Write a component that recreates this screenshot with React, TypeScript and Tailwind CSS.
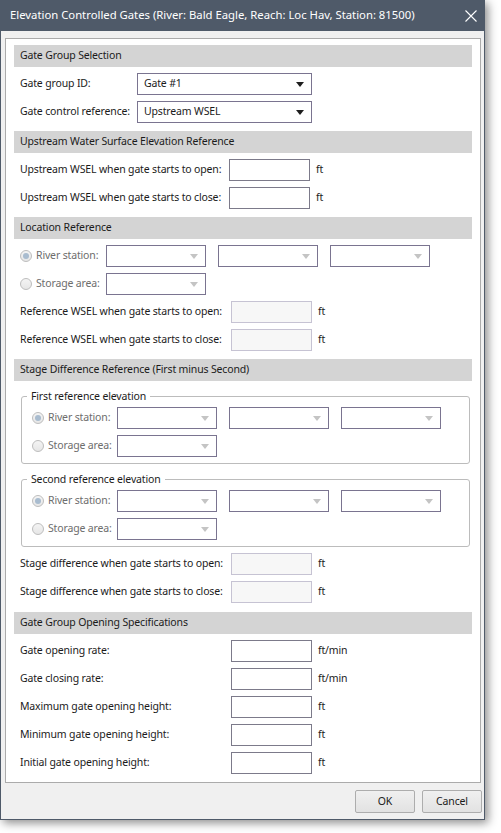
import React from 'react';

const ink = 'text-[#1b1b1b]';

function Arrow({ disabled }: { disabled?: boolean }) {
  return (
    <svg width="8" height="5" viewBox="0 0 8 5" className="shrink-0">
      <polygon points="0,0 8,0 4,5" fill={disabled ? '#c4c4c4' : '#1e1e1e'} />
    </svg>
  );
}

function Combo({ value, disabled, className }: { value?: string; disabled?: boolean; className: string }) {
  return (
    <div
      className={`flex h-[22px] shrink-0 items-center justify-between border border-[#7a7490] bg-white pl-[6px] pr-[7px] ${className}`}
    >
      <span className={`whitespace-nowrap ${ink}`}>{value}</span>
      <Arrow disabled={disabled} />
    </div>
  );
}

function TextBox({ disabled }: { disabled?: boolean }) {
  return (
    <div
      className={`h-[22px] w-[81px] shrink-0 border ${
        disabled ? 'border-[#c6c3d3] bg-[#f7f7f7]' : 'border-[#7c7a8a] bg-white'
      }`}
    />
  );
}

function Radio({ checked }: { checked?: boolean }) {
  return (
    <span className="grid h-[12px] w-[12px] shrink-0 place-items-center rounded-full border border-[#bdbdbd] bg-gradient-to-b from-[#f4f4f4] to-[#e6e6e6]">
      {checked && <span className="h-[6px] w-[6px] rounded-full bg-[#a9bccf]" />}
    </span>
  );
}

function Header({ children }: { children: React.ReactNode }) {
  return (
    <div className={`flex h-[22px] items-center whitespace-nowrap bg-[#d4d4d4] px-[6px] ${ink}`}>{children}</div>
  );
}

// label + textbox + unit
function InputRow({ label, unit, disabled, lw }: { label: string; unit: string; disabled?: boolean; lw: string }) {
  return (
    <div className="flex h-[22px] items-center">
      <span className={`${lw} shrink-0 whitespace-nowrap ${ink}`}>{label}</span>
      <TextBox disabled={disabled} />
      <span className={`ml-[6px] ${ink}`}>{unit}</span>
    </div>
  );
}

function StationRows({ lw }: { lw: string }) {
  return (
    <>
      <div className="flex h-[22px] items-center">
        <div className={`flex ${lw} shrink-0 items-center gap-[4px]`}>
          <Radio checked />
          <span className="whitespace-nowrap text-[#6d6d6d]">River station:</span>
        </div>
        <div className="flex gap-[12px]">
          <Combo disabled className="w-[100px]" />
          <Combo disabled className="w-[100px]" />
          <Combo disabled className="w-[100px]" />
        </div>
      </div>
      <div className="flex h-[22px] items-center">
        <div className={`flex ${lw} shrink-0 items-center gap-[4px]`}>
          <Radio />
          <span className="whitespace-nowrap text-[#6d6d6d]">Storage area:</span>
        </div>
        <Combo disabled className="w-[100px]" />
      </div>
    </>
  );
}

function GroupBox({ title, className }: { title: string; className: string }) {
  return (
    <fieldset className={`ml-[1px] mr-[2px] rounded-[3px] border border-[#bcbcbc] pb-[6px] pl-[10px] pt-[3px] ${className}`}>
      <legend className={`-ml-[5px] px-[4px] leading-[16px] ${ink}`}>{title}</legend>
      <div className="flex flex-col gap-[6px]">
        <StationRows lw="w-[85px]" />
      </div>
    </fieldset>
  );
}

export default function App() {
  return (
    <div className="h-[833px] w-[501px] bg-white font-['Noto_Sans',sans-serif] text-[10.5px] tracking-[-0.15px]">
      <div className="flex h-[820px] w-[485px] flex-col border-x border-b border-[#4f5a69] bg-[#f0f0f0] shadow-[3px_3px_9px_rgba(0,0,0,0.45)]">
        {/* title bar */}
        <div className="-mx-px flex h-[31px] shrink-0 items-center justify-between bg-[#4f5a69] pl-[10px] pr-[8px] text-white">
          <span className="whitespace-nowrap text-[11.3px] tracking-normal">
            Elevation Controlled Gates (River: Bald Eagle, Reach: Loc Hav, Station: 81500)
          </span>
          <svg width="12" height="12" viewBox="0 0 12 12">
            <path d="M0.5 0.5 L11.5 11.5 M11.5 0.5 L0.5 11.5" stroke="#fff" strokeWidth="1.1" />
          </svg>
        </div>

        {/* main panel */}
        <div className="ml-[4px] mr-[3px] mt-[7px] flex h-[745px] flex-col border border-[#ababab] bg-white px-[8px] pt-[6px]">
          <Header>Gate Group Selection</Header>
          <div className="mt-[6px] flex flex-col gap-[6px] pl-[6px]">
            <div className="flex h-[22px] items-center">
              <span className={`w-[117px] shrink-0 whitespace-nowrap ${ink}`}>Gate group ID:</span>
              <Combo value="Gate #1" className="w-[175px]" />
            </div>
            <div className="flex h-[22px] items-center">
              <span className={`w-[117px] shrink-0 whitespace-nowrap ${ink}`}>Gate control reference:</span>
              <Combo value="Upstream WSEL" className="w-[175px]" />
            </div>
          </div>

          <div className="mt-[8px]">
            <Header>Upstream Water Surface Elevation Reference</Header>
          </div>
          <div className="mt-[6px] flex flex-col gap-[6px] pl-[6px]">
            <InputRow lw="w-[209px]" label="Upstream WSEL when gate starts to open:" unit="ft" />
            <InputRow lw="w-[209px]" label="Upstream WSEL when gate starts to close:" unit="ft" />
          </div>

          <div className="mt-[8px]">
            <Header>Location Reference</Header>
          </div>
          <div className="mt-[6px] flex flex-col gap-[6px] pl-[6px]">
            <StationRows lw="w-[86px]" />
            <InputRow lw="w-[211px]" disabled label="Reference WSEL when gate starts to open:" unit="ft" />
            <InputRow lw="w-[211px]" disabled label="Reference WSEL when gate starts to close:" unit="ft" />
          </div>

          <div className="mt-[8px]">
            <Header>Stage Difference Reference (First minus Second)</Header>
          </div>
          <div className="flex flex-col pl-[6px]">
            <GroupBox title="First reference elevation" className="mt-[7px]" />
            <GroupBox title="Second reference elevation" className="mt-[7px]" />
            <div className="mt-[6px] flex flex-col gap-[6px]">
              <InputRow lw="w-[211px]" disabled label="Stage difference when gate starts to open:" unit="ft" />
              <InputRow lw="w-[211px]" disabled label="Stage difference when gate starts to close:" unit="ft" />
            </div>
          </div>

          <div className="mt-[9px]">
            <Header>Gate Group Opening Specifications</Header>
          </div>
          <div className="mt-[6px] flex flex-col gap-[6px] pl-[6px]">
            <InputRow lw="w-[211px]" label="Gate opening rate:" unit="ft/min" />
            <InputRow lw="w-[211px]" label="Gate closing rate:" unit="ft/min" />
            <InputRow lw="w-[211px]" label="Maximum gate opening height:" unit="ft" />
            <InputRow lw="w-[211px]" label="Minimum gate opening height:" unit="ft" />
            <InputRow lw="w-[211px]" label="Initial gate opening height:" unit="ft" />
          </div>
        </div>

        {/* footer */}
        <div className="flex justify-end gap-[7px] pr-[2px] pt-[7px]">
          <button className={`h-[23px] w-[60px] rounded-[2px] border border-[#adadad] bg-gradient-to-b from-[#f0f0f0] to-[#e2e2e2] ${ink}`}>
            OK
          </button>
          <button className={`h-[23px] w-[60px] rounded-[2px] border border-[#adadad] bg-gradient-to-b from-[#f0f0f0] to-[#e2e2e2] ${ink}`}>
            Cancel
          </button>
        </div>
      </div>
    </div>
  );
}
